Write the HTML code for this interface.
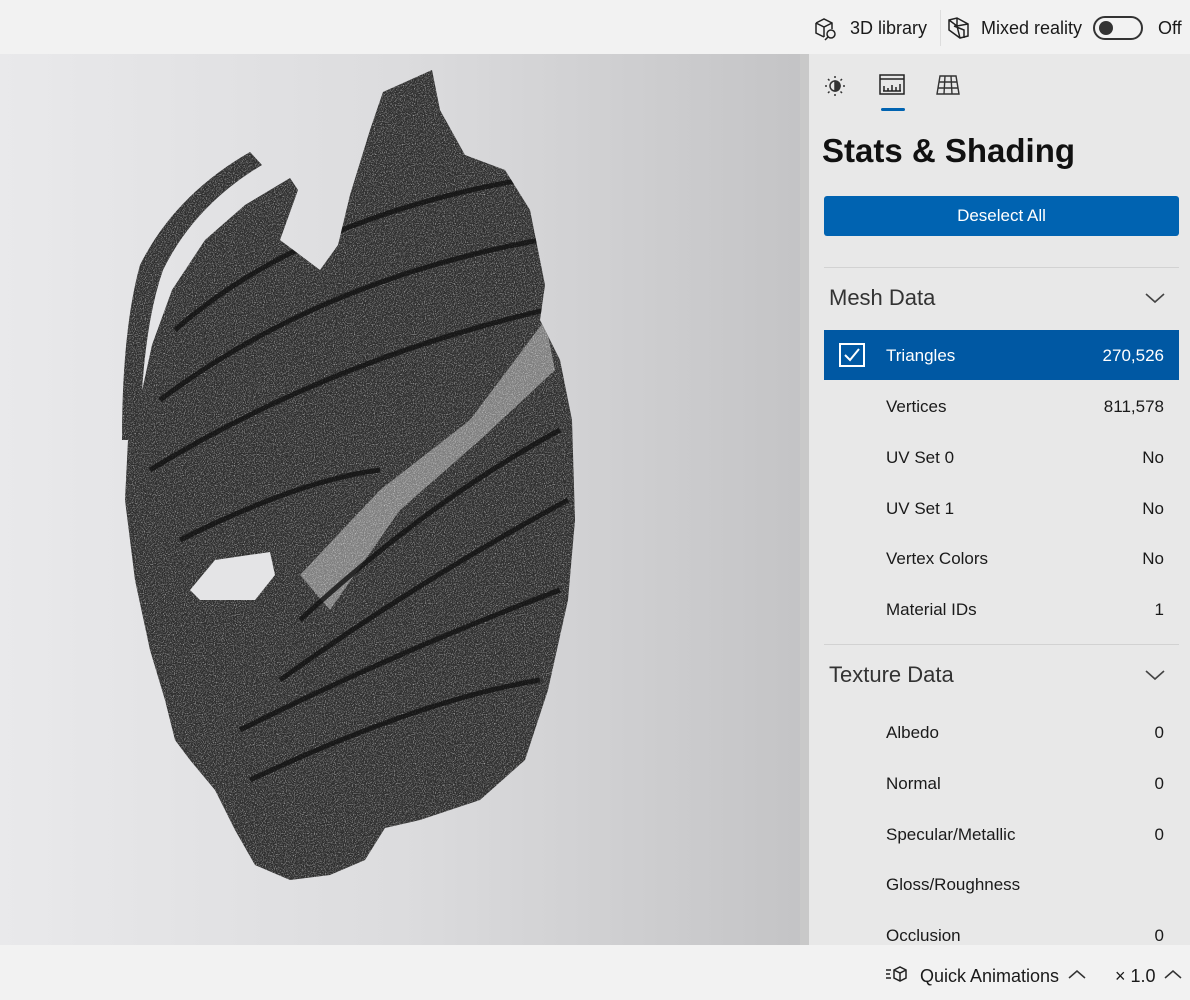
<!DOCTYPE html>
<html><head><meta charset="utf-8"><style>
*{margin:0;padding:0;box-sizing:border-box}
body{width:1190px;height:1000px;overflow:hidden;font-family:"Liberation Sans",sans-serif;background:#f2f2f2;position:relative;color:#1a1a1a}
.top{position:absolute;left:0;top:0;width:1190px;height:54px;background:#f2f2f2}
.vp{position:absolute;left:0;top:54px;width:800px;height:891px;background:linear-gradient(90deg,#e9e9eb 0%,#dcdcde 50%,#c4c4c6 100%)}
.sb{position:absolute;left:800px;top:54px;width:9px;height:891px;background:#c9c9c9}
.panel{position:absolute;left:809px;top:54px;width:381px;height:891px;background:#e8e8e8;overflow:hidden}
.bot{position:absolute;left:0;top:945px;width:1190px;height:55px;background:#f2f2f2}
.t{position:absolute;white-space:nowrap}
.row{position:absolute;left:15px;width:355px;height:50px;font-size:17px}
.row .l{position:absolute;left:62px;top:16px}
.row .v{position:absolute;right:15px;top:16px}
.sep{position:absolute;left:15px;width:355px;height:1px;background:#d2d2d2}
</style></head><body>
<div class="top">
<svg class="t" style="left:814px;top:16px" width="26" height="26" viewBox="0 0 26 26" fill="none" stroke="#222" stroke-width="1.5"><path d="M2 7 L10 3 L18 7 L18 13 M2 7 L2 17 L10 21 M2 7 L10 11 L18 7 M10 11 L10 21"/><circle cx="17" cy="18" r="4"/><path d="M14 21 L11 24"/></svg>
<div class="t" style="left:850px;top:18px;font-size:18px">3D library</div>
<div class="t" style="left:940px;top:10px;width:1px;height:36px;background:#ddd"></div>
<svg class="t" style="left:946px;top:16px" width="26" height="26" viewBox="0 0 26 26" fill="none" stroke="#222" stroke-width="1.5"><path d="M3 4 L11 2 L22 8 L22 20 L14 22 L3 14 Z M11 2 L11 10 M3 4 L11 10 L22 8 M11 10 L14 22 M8 10 L18 14 L18 22"/></svg>
<div class="t" style="left:981px;top:18px;font-size:18px">Mixed reality</div>
<div class="t" style="left:1093px;top:16px;width:50px;height:24px;border:2px solid #333;border-radius:12px"><div style="position:absolute;left:4px;top:3px;width:14px;height:14px;border-radius:7px;background:#333"></div></div>
<div class="t" style="left:1158px;top:18px;font-size:18px">Off</div>
</div>
<div class="vp">
<svg width="800" height="891" viewBox="0 54 800 891">
<defs>
<filter id="n"><feTurbulence type="fractalNoise" baseFrequency="0.9" numOctaves="2" result="t"/><feColorMatrix in="t" type="matrix" values="0 0 0 0 1  0 0 0 0 1  0 0 0 0 1  0 0 0 1.6 -0.75"/><feComposite in2="SourceGraphic" operator="in"/></filter>
<clipPath id="c">
<path d="M383,92 L432,70 L440,110 L465,155 L505,170 L530,210 L545,285 L540,320 L560,360 L572,420 L575,520 L568,600 L548,690 L525,760 L480,800 L420,820 L385,828 L365,860 L330,875 L290,880 L255,865 L235,830 L215,790 L190,760 L175,740 L165,700 L150,650 L135,580 L125,500 L128,440 L140,400 L152,345 L172,290 L205,240 L245,205 L290,178 L298,190 L280,240 L320,270 L338,245 L350,195 L370,130 Z"/>
<path d="M250,152 L262,165 Q195,205 163,270 Q142,330 140,440 L122,440 Q122,330 140,265 Q175,195 250,152 Z"/>
</clipPath>
</defs>
<g clip-path="url(#c)">
<rect x="100" y="60" width="500" height="840" fill="#2e2e2e"/>
<path d="M300,575 L380,490 L470,420 L545,320 L555,370 L480,440 L400,510 L330,610 Z" fill="#7e7e7e"/>
<rect x="100" y="60" width="500" height="840" fill="#fff" filter="url(#n)"/>
<g stroke="#111" stroke-width="5" fill="none" opacity=".8">
<path d="M175,330 Q300,220 520,180"/><path d="M160,400 Q320,280 540,240"/><path d="M150,470 Q330,360 545,310"/>
<path d="M180,540 Q300,480 380,470"/><path d="M300,620 Q430,500 560,430"/><path d="M280,680 Q420,580 568,500"/>
<path d="M240,730 Q400,650 560,590"/><path d="M250,780 Q420,700 540,680"/>
</g>
</g>
<path d="M190,590 L215,560 L270,552 L275,575 L255,600 L200,600 Z" fill="#e4e4e6"/>
</svg>
</div>
<div class="sb"></div>
<div class="panel">
<svg class="t" style="left:14px;top:20px" width="24" height="24" viewBox="0 0 24 24" fill="none" stroke="#333" stroke-width="1.5"><circle cx="12" cy="12" r="5"/><path d="M12 12 L12 7 A5 5 0 0 1 12 17 Z" fill="#333"/><path d="M12 2v2M12 20v2M2 12h2M20 12h2M5 5l1.5 1.5M17.5 17.5L19 19M5 19l1.5-1.5M17.5 6.5L19 5"/></svg>
<svg class="t" style="left:70px;top:20px" width="26" height="22" viewBox="0 0 26 22" fill="none" stroke="#222" stroke-width="1.5"><rect x="1" y="1" width="24" height="19"/><path d="M1 5h24M5 17v-5M9 17v-3M13 17v-6M17 17v-4M21 17v-7M4 17h18"/></svg>
<div class="t" style="left:72px;top:54px;width:24px;height:3px;background:#0063b1;border-radius:2px"></div>
<svg class="t" style="left:126px;top:20px" width="26" height="22" viewBox="0 0 26 22" fill="none" stroke="#333" stroke-width="1.4"><path d="M5 2h16l3 18H2Z M4 8h18M3 14h20M10 2L9 20M16 2l1 18"/></svg>
<div class="t" style="left:13px;top:78px;font-size:33px;font-weight:bold;color:#111">Stats &amp; Shading</div>
<div class="t" style="left:15px;top:142px;width:355px;height:40px;background:#0063b1;border-radius:3px;color:#fff;font-size:17px;text-align:center;line-height:40px">Deselect All</div>
<div class="sep" style="top:213px"></div>
<div class="t" style="left:20px;top:231px;font-size:22px;color:#333">Mesh Data</div>
<svg class="t" style="left:336px;top:238px" width="20" height="12" viewBox="0 0 20 12" fill="none" stroke="#444" stroke-width="1.6"><path d="M1 2L10 10L19 2"/></svg>
<div class="row" style="top:276px;background:#0058a3;color:#fff"><div style="position:absolute;left:15px;top:13px;width:26px;height:24px;border:2px solid #fff"><svg width="22" height="20" viewBox="0 0 22 20"><path d="M4 10L9 15L18 4" stroke="#fff" stroke-width="2" fill="none"/></svg></div><span class="l">Triangles</span><span class="v">270,526</span></div>
<div class="row" style="top:327px"><span class="l">Vertices</span><span class="v">811,578</span></div>
<div class="row" style="top:378px"><span class="l">UV Set 0</span><span class="v">No</span></div>
<div class="row" style="top:429px"><span class="l">UV Set 1</span><span class="v">No</span></div>
<div class="row" style="top:479px"><span class="l">Vertex Colors</span><span class="v">No</span></div>
<div class="row" style="top:530px"><span class="l">Material IDs</span><span class="v">1</span></div>
<div class="sep" style="top:590px"></div>
<div class="t" style="left:20px;top:608px;font-size:22px;color:#333">Texture Data</div>
<svg class="t" style="left:336px;top:615px" width="20" height="12" viewBox="0 0 20 12" fill="none" stroke="#444" stroke-width="1.6"><path d="M1 2L10 10L19 2"/></svg>
<div class="row" style="top:653px"><span class="l">Albedo</span><span class="v">0</span></div>
<div class="row" style="top:704px"><span class="l">Normal</span><span class="v">0</span></div>
<div class="row" style="top:755px"><span class="l">Specular/Metallic</span><span class="v">0</span></div>
<div class="row" style="top:805px"><span class="l">Gloss/Roughness</span><span class="v"></span></div>
<div class="row" style="top:856px"><span class="l">Occlusion</span><span class="v">0</span></div>
</div>
<div class="bot">
<svg class="t" style="left:885px;top:20px" width="26" height="20" viewBox="0 0 26 20" fill="none" stroke="#222" stroke-width="1.5"><path d="M1 5h5M1 9h4M1 13h5M9 5l6-3 6 3v8l-6 3-6-3z M9 5l6 3 6-3M15 8v8"/></svg>
<div class="t" style="left:920px;top:21px;font-size:18px">Quick Animations</div>
<svg class="t" style="left:1068px;top:24px" width="18" height="10" viewBox="0 0 18 10" fill="none" stroke="#333" stroke-width="1.5"><path d="M1 9L9 2L17 9"/></svg>
<div class="t" style="left:1115px;top:21px;font-size:18px">× 1.0</div>
<svg class="t" style="left:1164px;top:24px" width="18" height="10" viewBox="0 0 18 10" fill="none" stroke="#333" stroke-width="1.5"><path d="M1 9L9 2L17 9"/></svg>
</div>
</body></html>
